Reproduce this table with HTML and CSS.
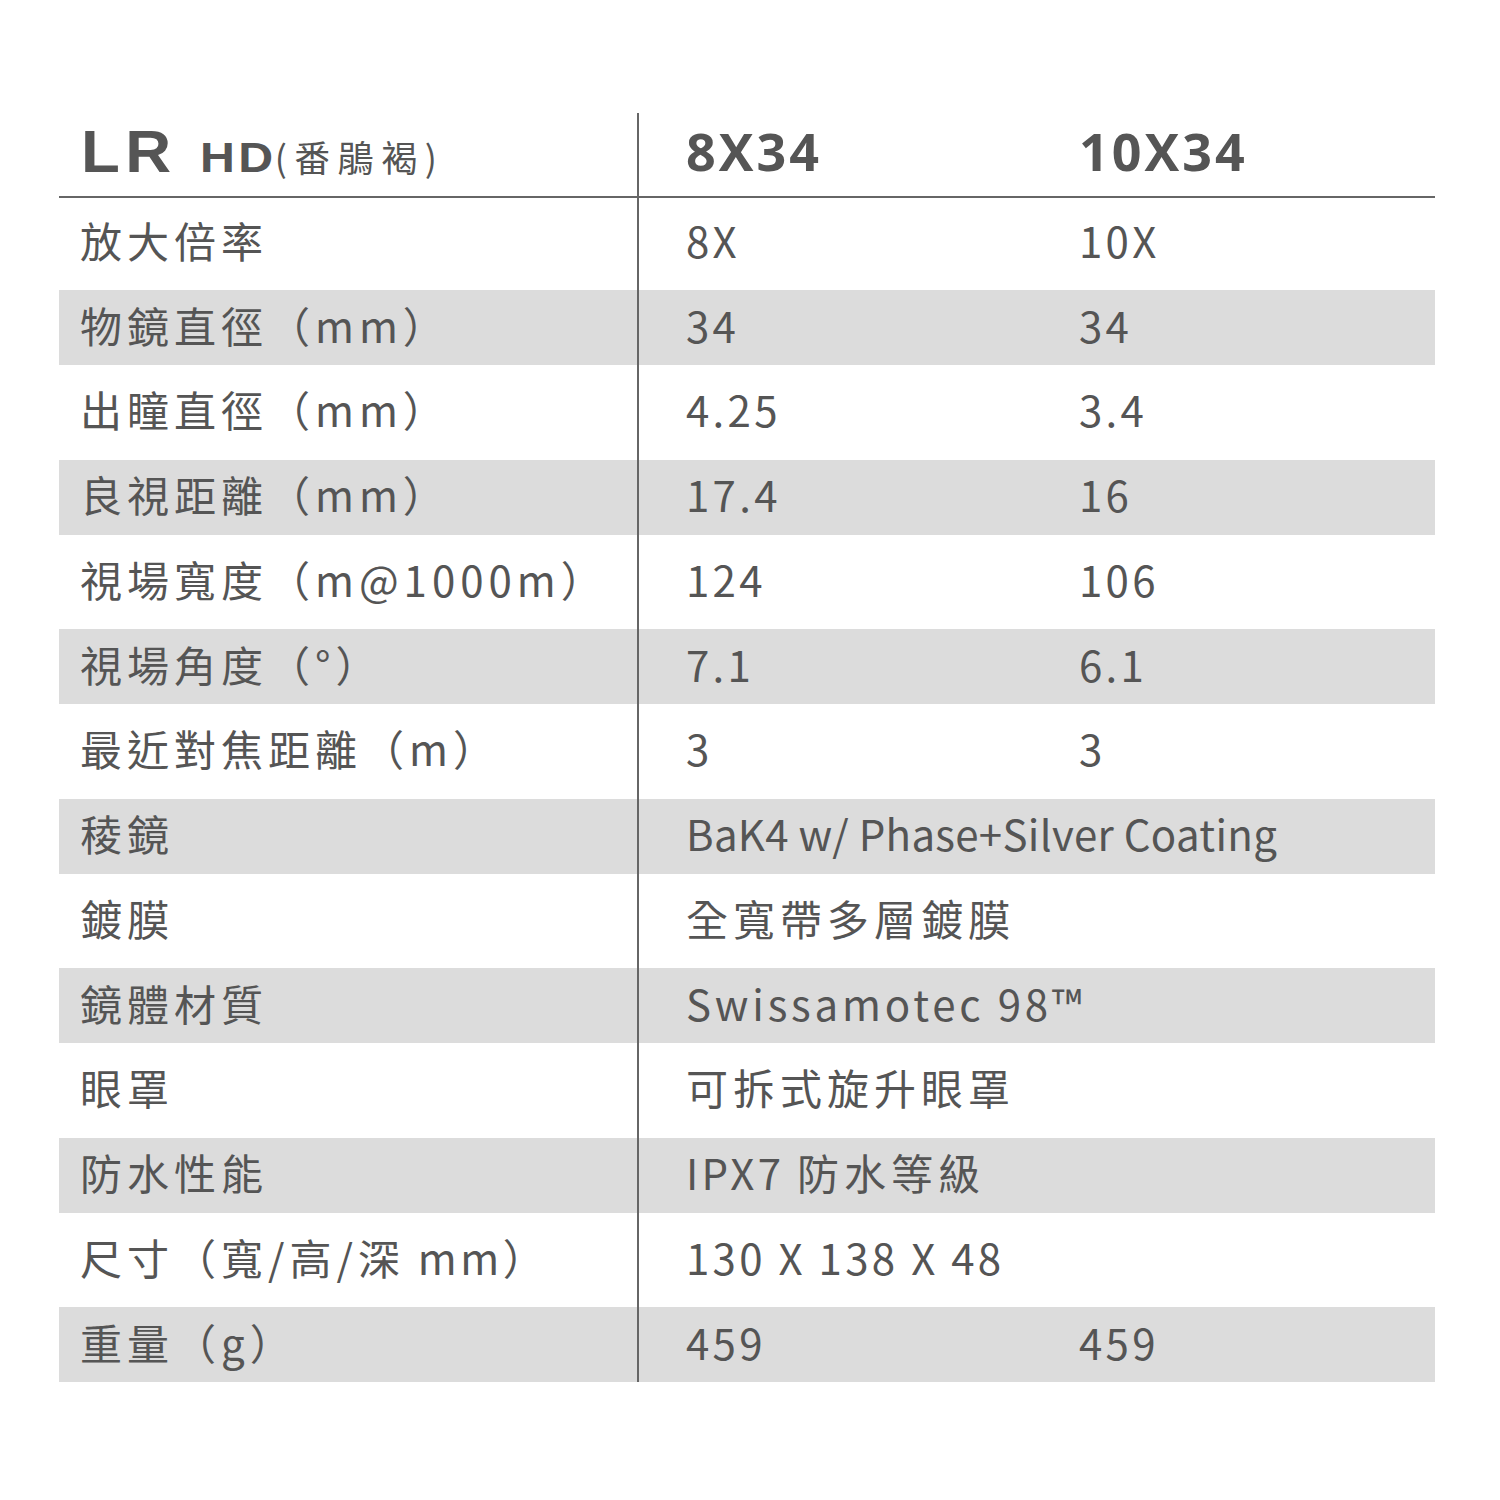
FILE: index.html
```html
<!DOCTYPE html>
<html lang="zh-Hant">
<head>
<meta charset="utf-8">
<title>LR HD 規格</title>
<link rel="stylesheet" href="styles.css">
</head>
<body>
<div class="spec">
  <div class="head">
    <div class="title"><span class="lr">LR</span><span class="hd">HD</span><span class="sub">(番鵑褐)</span></div>
    <div class="model">8X34</div>
    <div class="model">10X34</div>
  </div>
  <div class="row"><div class="lab">放大倍率</div><div class="val">8X</div><div class="val">10X</div></div>
  <div class="row alt"><div class="lab">物鏡直徑（mm）</div><div class="val">34</div><div class="val">34</div></div>
  <div class="row"><div class="lab">出瞳直徑（mm）</div><div class="val">4.25</div><div class="val">3.4</div></div>
  <div class="row alt"><div class="lab">良視距離（mm）</div><div class="val">17.4</div><div class="val">16</div></div>
  <div class="row"><div class="lab">視場寬度（m@1000m）</div><div class="val">124</div><div class="val">106</div></div>
  <div class="row alt"><div class="lab">視場角度（°）</div><div class="val">7.1</div><div class="val">6.1</div></div>
  <div class="row"><div class="lab">最近對焦距離（m）</div><div class="val">3</div><div class="val">3</div></div>
  <div class="row alt"><div class="lab">稜鏡</div><div class="val span tight">BaK4 w/ Phase+Silver Coating</div></div>
  <div class="row"><div class="lab">鍍膜</div><div class="val span cjk">全寬帶多層鍍膜</div></div>
  <div class="row alt"><div class="lab">鏡體材質</div><div class="val span wide">Swissamotec 98™</div></div>
  <div class="row"><div class="lab">眼罩</div><div class="val span cjk">可拆式旋升眼罩</div></div>
  <div class="row alt"><div class="lab">防水性能</div><div class="val span">IPX7 <span class="cjk">防水等級</span></div></div>
  <div class="row"><div class="lab">尺寸（寬/高/深<span class="mm"> mm</span>）</div><div class="val span">130 X 138 X 48</div></div>
  <div class="row alt"><div class="lab">重量（g）</div><div class="val">459</div><div class="val">459</div></div>
</div>
</body>
</html>
```
FILE: styles.css
```css
html, body {
  margin: 0;
  padding: 0;
  background: #ffffff;
}
body {
  font-family: "Noto Sans CJK TC", "Noto Sans", sans-serif;
  color: #555555;
}
.spec {
  position: relative;
  margin: 113px 0 0 59px;
  width: 1376px;
}
.spec::before {
  content: "";
  position: absolute;
  left: 578px;
  top: 0;
  bottom: 4.875px;
  width: 2px;
  background: #666666;
}
.head {
  display: grid;
  grid-template-columns: 578px 393px 1fr;
  height: 83px;
  border-bottom: 2px solid #666666;
  align-items: end;
}
.title {
  display: flex;
  align-items: baseline;
  padding-left: 22px;
  padding-bottom: 14px;
  line-height: 1;
}
.lr {
  display: inline-block;
  font-family: "Liberation Sans", Arial, sans-serif;
  font-weight: 700;
  font-size: 60px;
  letter-spacing: 5px;
  transform: scaleX(1.06);
  transform-origin: left bottom;
  margin-right: 29px;
}
.hd {
  display: inline-block;
  font-family: "Liberation Sans", Arial, sans-serif;
  font-weight: 700;
  font-size: 42px;
  letter-spacing: 3px;
  transform: scaleX(1.15);
  transform-origin: left bottom;
  margin-right: 8px;
}
.sub {
  font-family: "Noto Sans CJK TC", sans-serif;
  font-size: 36px;
  letter-spacing: 7.5px;
}
.model {
  font-family: "Open Sans", sans-serif;
  font-weight: 700;
  font-size: 52px;
  letter-spacing: 3px;
  line-height: 1;
  padding-left: 49px;
  padding-bottom: 19px;
}
.row {
  box-sizing: border-box;
  display: grid;
  grid-template-columns: 578px 393px 1fr;
  height: 84.75px;
  padding-bottom: 6px;
  align-items: center;
  font-size: 42px;
  letter-spacing: 5px;
  line-height: 1;
}
.head + .row {
  margin-top: 2.4px;
}
.row.alt {
  background: linear-gradient(#dcdcdc, #dcdcdc) center / 100% 75px no-repeat;
}
.lab {
  padding-left: 21px;
  white-space: nowrap;
}
.lab .mm {
  letter-spacing: 3.5px;
}
.val {
  padding-left: 49px;
  white-space: nowrap;
  letter-spacing: 3.3px;
}
.val.span {
  grid-column: 2 / 4;
}
.val.tight {
  letter-spacing: 0.3px;
}
.val.wide {
  letter-spacing: 3.8px;
}
.cjk {
  letter-spacing: 5px;
}
```
